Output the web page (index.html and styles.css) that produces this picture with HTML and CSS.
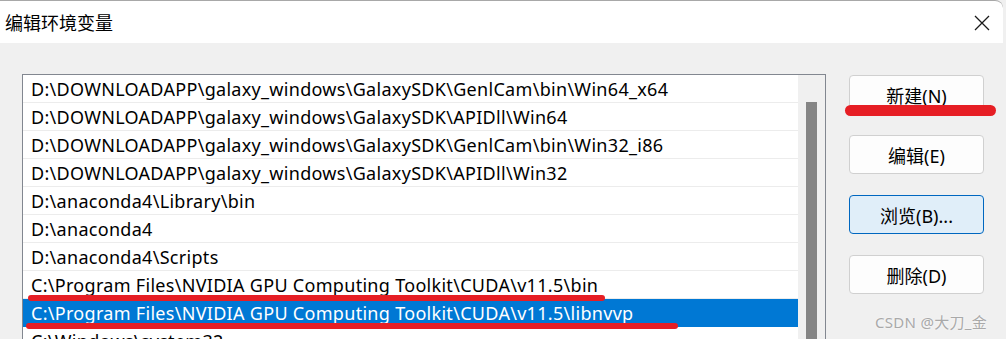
FILE: index.html
```html
<!DOCTYPE html>
<html lang="zh-CN">
<head>
    <meta charset="UTF-8">
    <meta name="viewport" content="width=device-width, initial-scale=1.0">
    <title>编辑环境变量</title>
    <link rel="stylesheet" href="styles.css">
</head>
<body>
    <div class="window">
        <div class="titlebar">
            <span class="title">编辑环境变量</span>
            <svg class="close" width="16" height="16" viewBox="0 0 16 16">
                <path d="M1 1 L15 15 M15 1 L1 15" stroke="#1a1a1a" stroke-width="1.3" fill="none"/>
            </svg>
        </div>

        <div class="content">
            <div class="listbox">
                <div class="rows">
                    <div class="row">D:\DOWNLOADAPP\galaxy_windows\GalaxySDK\GenlCam\bin\Win64_x64</div>
                    <div class="row">D:\DOWNLOADAPP\galaxy_windows\GalaxySDK\APIDll\Win64</div>
                    <div class="row">D:\DOWNLOADAPP\galaxy_windows\GalaxySDK\GenlCam\bin\Win32_i86</div>
                    <div class="row">D:\DOWNLOADAPP\galaxy_windows\GalaxySDK\APIDll\Win32</div>
                    <div class="row">D:\anaconda4\Library\bin</div>
                    <div class="row">D:\anaconda4</div>
                    <div class="row">D:\anaconda4\Scripts</div>
                    <div class="row">C:\Program Files\NVIDIA GPU Computing Toolkit\CUDA\v11.5\bin</div>
                    <div class="row selected">C:\Program Files\NVIDIA GPU Computing Toolkit\CUDA\v11.5\libnvvp</div>
                    <div class="row">C:\Windows\system32</div>
                </div>
                <div class="scrollbar">
                    <div class="thumb"></div>
                </div>
            </div>

            <div class="buttons">
                <button class="btn">新建(N)</button>
                <button class="btn">编辑(E)</button>
                <button class="btn focused">浏览(B)...</button>
                <button class="btn">删除(D)</button>
            </div>
        </div>
    </div>

    <!-- red marker strokes drawn over the screenshot -->
    <div class="mark mark-new"></div>
    <div class="mark mark-bin"></div>
    <div class="mark mark-nvvp"></div>

    <div class="watermark">CSDN @大刀_金</div>
</body>
</html>
```

FILE: styles.css
```css
body {
    margin: 0;
    width: 1006px;
    height: 339px;
    overflow: hidden;
    background-color: #f0f0f0;
    font-family: "Noto Sans", "Noto Sans CJK SC", sans-serif;
    color: #000;
    position: relative;
}
.window {
    display: flex;
    flex-direction: column;
}
.titlebar {
    height: 43px;
    background-color: #fff;
    border-top: 1px solid #a8a8a8;
    border-top-right-radius: 8px;
    margin-right: 3px;
    box-sizing: border-box;
    display: flex;
    align-items: center;
    justify-content: space-between;
    padding: 0 13px 0 5px;
}
.title {
    font-family: "Noto Sans CJK SC", sans-serif;
    font-size: 18px;
    margin-top: -1px;
}
.close {
    margin-top: 1px;
}
.content {
    display: flex;
    align-items: flex-start;
    padding: 31px 0 0 22px;
}
.listbox {
    width: 802px;
    height: 300px;
    border: 1px solid #828790;
    border-bottom: none;
    background-color: #fff;
    display: flex;
}
.rows {
    width: 775px;
    overflow: hidden;
}
.row {
    height: 28px;
    line-height: 25px;
    padding: 2px 0 0 8px;
    border-bottom: 1px solid #ececec;
    box-sizing: border-box;
    font-size: 18px;
    letter-spacing: 0.3px;
    white-space: nowrap;
}
.row.selected {
    background-color: #0078d4;
    color: #fff;
    border-bottom-color: #0078d4;
}
.scrollbar {
    flex: 1;
    background-color: #f0f0f0;
    padding: 27px 0 0 8px;
}
.thumb {
    width: 11px;
    height: 260px;
    background-color: #858585;
}
.buttons {
    display: flex;
    flex-direction: column;
    gap: 21px;
    margin-left: 23px;
    padding-top: 1px;
}
.btn {
    width: 135px;
    height: 39px;
    background-color: #fdfdfd;
    border: 1px solid #d0d0d0;
    border-radius: 4px;
    font-family: "Noto Sans", "Noto Sans CJK SC", sans-serif;
    font-size: 18px;
    color: #000;
    padding: 0;
}
.btn.focused {
    background-color: #e0eef9;
    border-color: #0067c0;
}
.mark {
    position: absolute;
    background-color: #e61e24;
    border-radius: 6px;
}
.mark-new {
    left: 845px;
    top: 105px;
    width: 151px;
    height: 11px;
}
.mark-bin {
    left: 28px;
    top: 295px;
    width: 577px;
    height: 6px;
    border-radius: 3px;
}
.mark-nvvp {
    left: 26px;
    top: 323px;
    width: 652px;
    height: 6px;
    border-radius: 3px;
}
.watermark {
    position: absolute;
    left: 875px;
    top: 311px;
    font-family: "Noto Sans", "Noto Sans CJK SC", sans-serif;
    font-size: 15px;
    letter-spacing: 0.3px;
    color: #a9a9a9;
    text-shadow: 0 0 2px #fff;
}
```
